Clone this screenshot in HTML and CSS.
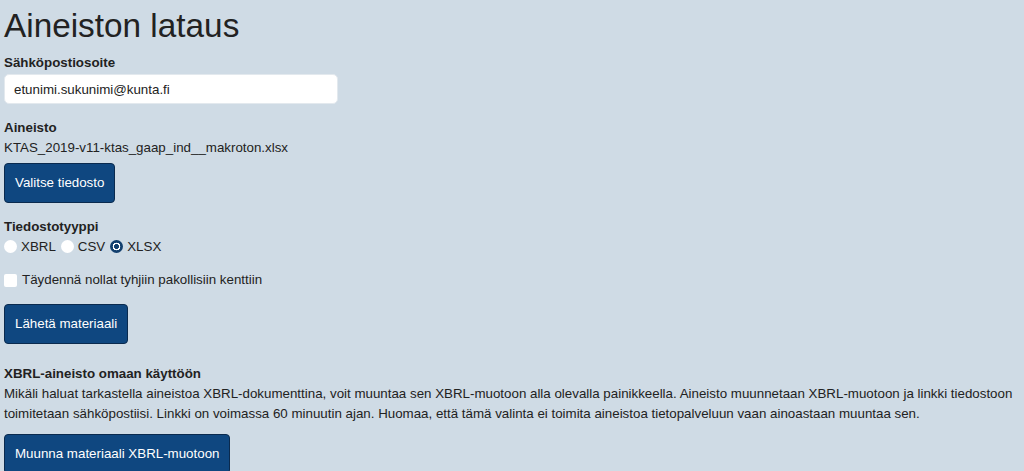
FILE: index.html
```html
<!DOCTYPE html>
<html lang="fi">
<head>
<meta charset="utf-8">
<title>Aineiston lataus</title>
<link rel="stylesheet" href="styles.css">
</head>
<body>
<main class="page">
  <h1 class="title">Aineiston lataus</h1>

  <label class="label label-email" for="email">Sähköpostiosoite</label>
  <input class="input" id="email" type="text" value="etunimi.sukunimi@kunta.fi">

  <div class="label label-file">Aineisto</div>
  <div class="text">KTAS_2019-v11-ktas_gaap_ind__makroton.xlsx</div>
  <button class="btn btn-choose" type="button">Valitse tiedosto</button>

  <div class="label label-type">Tiedostotyyppi</div>
  <div class="radios">
    <label class="radio"><span class="dot"></span>XBRL</label>
    <label class="radio"><span class="dot"></span>CSV</label>
    <label class="radio"><span class="dot checked"></span>XLSX</label>
  </div>

  <label class="check"><span class="box"></span>Täydennä nollat tyhjiin pakollisiin kenttiin</label>

  <button class="btn btn-send" type="button">Lähetä materiaali</button>

  <div class="label label-xbrl">XBRL-aineisto omaan käyttöön</div>
  <p class="para">Mikäli haluat tarkastella aineistoa XBRL-dokumenttina, voit muuntaa sen XBRL-muotoon alla olevalla painikkeella. Aineisto muunnetaan XBRL-muotoon ja linkki tiedostoon toimitetaan sähköpostiisi. Linkki on voimassa 60 minuutin ajan. Huomaa, että tämä valinta ei toimita aineistoa tietopalveluun vaan ainoastaan muuntaa sen.</p>
  <button class="btn btn-convert" type="button">Muunna materiaali XBRL-muotoon</button>
</main>
</body>
</html>
```

FILE: styles.css
```css
* { box-sizing: border-box; }
html, body {
  margin: 0;
  padding: 0;
  background: #cfdbe5;
}
body {
  font-family: "Liberation Sans", Arial, sans-serif;
  font-size: 13.33px;
  line-height: 20px;
  color: #222;
  overflow: hidden;
}
.page {
  padding: 6px 4px 0 4px;
  display: flex;
  flex-direction: column;
  align-items: flex-start;
}
.title {
  margin: 0;
  font-size: 33.33px;
  line-height: 40px;
  font-weight: 400;
  color: #222;
}
.label {
  font-weight: 700;
  display: block;
  color: #222;
}
.label-email { margin-top: 7px; }
.input {
  margin-top: 1px;
  width: 334px;
  height: 30px;
  border: 1px solid #e3e9ee;
  border-radius: 5px;
  background: #fff;
  padding: 0 9px;
  font: inherit;
  color: #222;
  outline: none;
}
.label-file { margin-top: 14px; }
.text { color: #222; }
.btn {
  background: #0f4780;
  color: #fff;
  border: 1px solid #0a2a4e;
  border-radius: 4px;
  height: 40px;
  padding: 0 10px;
  font: inherit;
  cursor: pointer;
}
.btn-choose { margin-top: 5px; }
.label-type { margin-top: 14px; }
.radios {
  display: flex;
  align-items: center;
  gap: 5px;
}
.radio {
  display: flex;
  align-items: center;
  gap: 4px;
}
.dot {
  width: 13px;
  height: 13px;
  border-radius: 50%;
  background: #fff;
  display: inline-block;
  position: relative;
  top: -1px;
}
.dot.checked {
  background: radial-gradient(circle, #123f6e 0 2.2px, #fff 2.7px 3.6px, #123f6e 4.1px);
}
.check {
  margin-top: 13px;
  display: flex;
  align-items: center;
  gap: 5px;
  color: #222;
}
.box {
  width: 13px;
  height: 13px;
  border-radius: 2px;
  background: #fff;
  display: inline-block;
}
.btn-send { margin-top: 14px; }
.label-xbrl { margin-top: 20px; }
.para {
  margin: 0;
  width: 1016px;
}
.btn-convert { margin-top: 10px; }
```
